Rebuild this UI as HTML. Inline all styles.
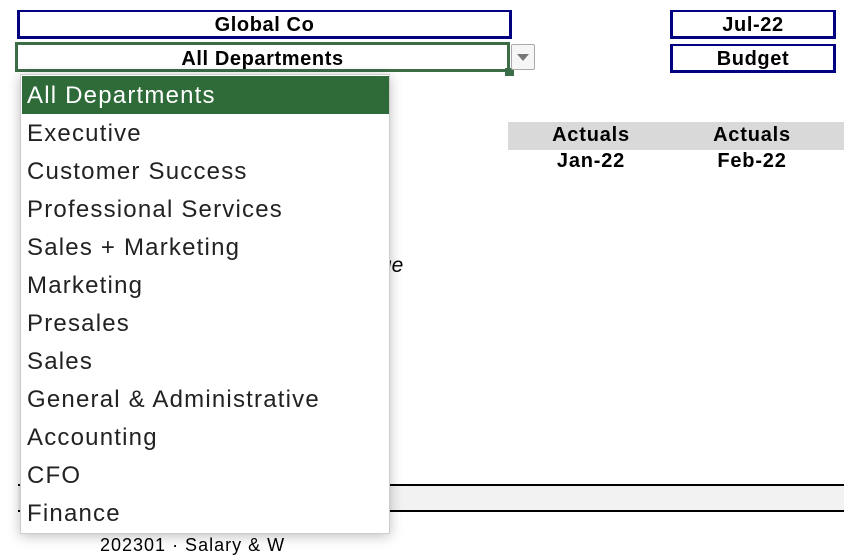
<!DOCTYPE html>
<html><head><style>
body{margin:0;width:844px;height:542px;background:#fff;position:relative;overflow:hidden;font-family:"Liberation Sans",Arial,sans-serif}
.a{position:absolute;box-sizing:border-box}
.hb{border:3px solid #000080;border-top-width:2px;font-weight:bold;font-size:20px;letter-spacing:0.6px;text-align:center;line-height:26px;color:#000}
.item{position:absolute;left:27px;font-size:24px;letter-spacing:1.2px;color:#222;line-height:38px;height:38px;white-space:nowrap}
.h{font-weight:bold;font-size:20px;letter-spacing:0.8px;line-height:26px;text-align:center;width:120px}
</style></head><body>
<div class="a hb" style="left:17px;top:10px;width:495px;height:29px">Global Co</div>
<div class="a hb" style="left:670px;top:10px;width:166px;height:29px">Jul-22</div>
<div class="a hb" style="left:670px;top:44px;width:166px;height:29px;line-height:27px">Budget</div>
<div class="a" style="left:15px;top:42px;width:495px;height:30px;border:3px solid #3b6e47;font-weight:bold;font-size:20px;letter-spacing:0.6px;text-align:center;line-height:29px">All Departments</div>
<div class="a" style="left:505px;top:68px;width:9px;height:8px;background:#3b6e47"></div>
<div class="a" style="left:511px;top:44px;width:24px;height:26px;border:1px solid #aaa;border-radius:2px;background:#f6f6f6"></div>
<div class="a" style="left:517px;top:54px;width:0;height:0;border-left:6px solid transparent;border-right:6px solid transparent;border-top:7px solid #777"></div>
<div class="a" style="left:508px;top:122px;width:336px;height:28px;background:#d9d9d9"></div>
<div class="a h" style="left:531px;top:122px">Actuals</div>
<div class="a h" style="left:692px;top:122px">Actuals</div>
<div class="a h" style="left:531px;top:148px">Jan-22</div>
<div class="a h" style="left:692px;top:148px">Feb-22</div>
<div class="a" style="left:380px;top:254px;font-style:italic;font-size:21px">ue</div>
<div class="a" style="left:18px;top:484px;width:826px;height:28px;background:#f2f2f2;border-top:2px solid #000;border-bottom:2px solid #000"></div>
<div class="a" style="left:100px;top:535px;font-size:18px;letter-spacing:1px">202301 · Salary &amp; W</div>
<div class="a" style="left:20px;top:74px;width:370px;height:460px;background:#fff;border:1px solid #ccc;box-shadow:0 2px 12px rgba(0,0,0,.25)">
<div class="a" style="left:1px;top:1px;width:367px;height:38px;background:#2e6b38"></div>
<div class="item" style="left:6px;top:2px;color:#fff">All Departments</div>
<div class="item" style="left:6px;top:40px">Executive</div>
<div class="item" style="left:6px;top:78px">Customer Success</div>
<div class="item" style="left:6px;top:116px">Professional Services</div>
<div class="item" style="left:6px;top:154px">Sales + Marketing</div>
<div class="item" style="left:6px;top:192px">Marketing</div>
<div class="item" style="left:6px;top:230px">Presales</div>
<div class="item" style="left:6px;top:268px">Sales</div>
<div class="item" style="left:6px;top:306px">General &amp; Administrative</div>
<div class="item" style="left:6px;top:344px">Accounting</div>
<div class="item" style="left:6px;top:382px">CFO</div>
<div class="item" style="left:6px;top:420px">Finance</div>
</div>
</body></html>
